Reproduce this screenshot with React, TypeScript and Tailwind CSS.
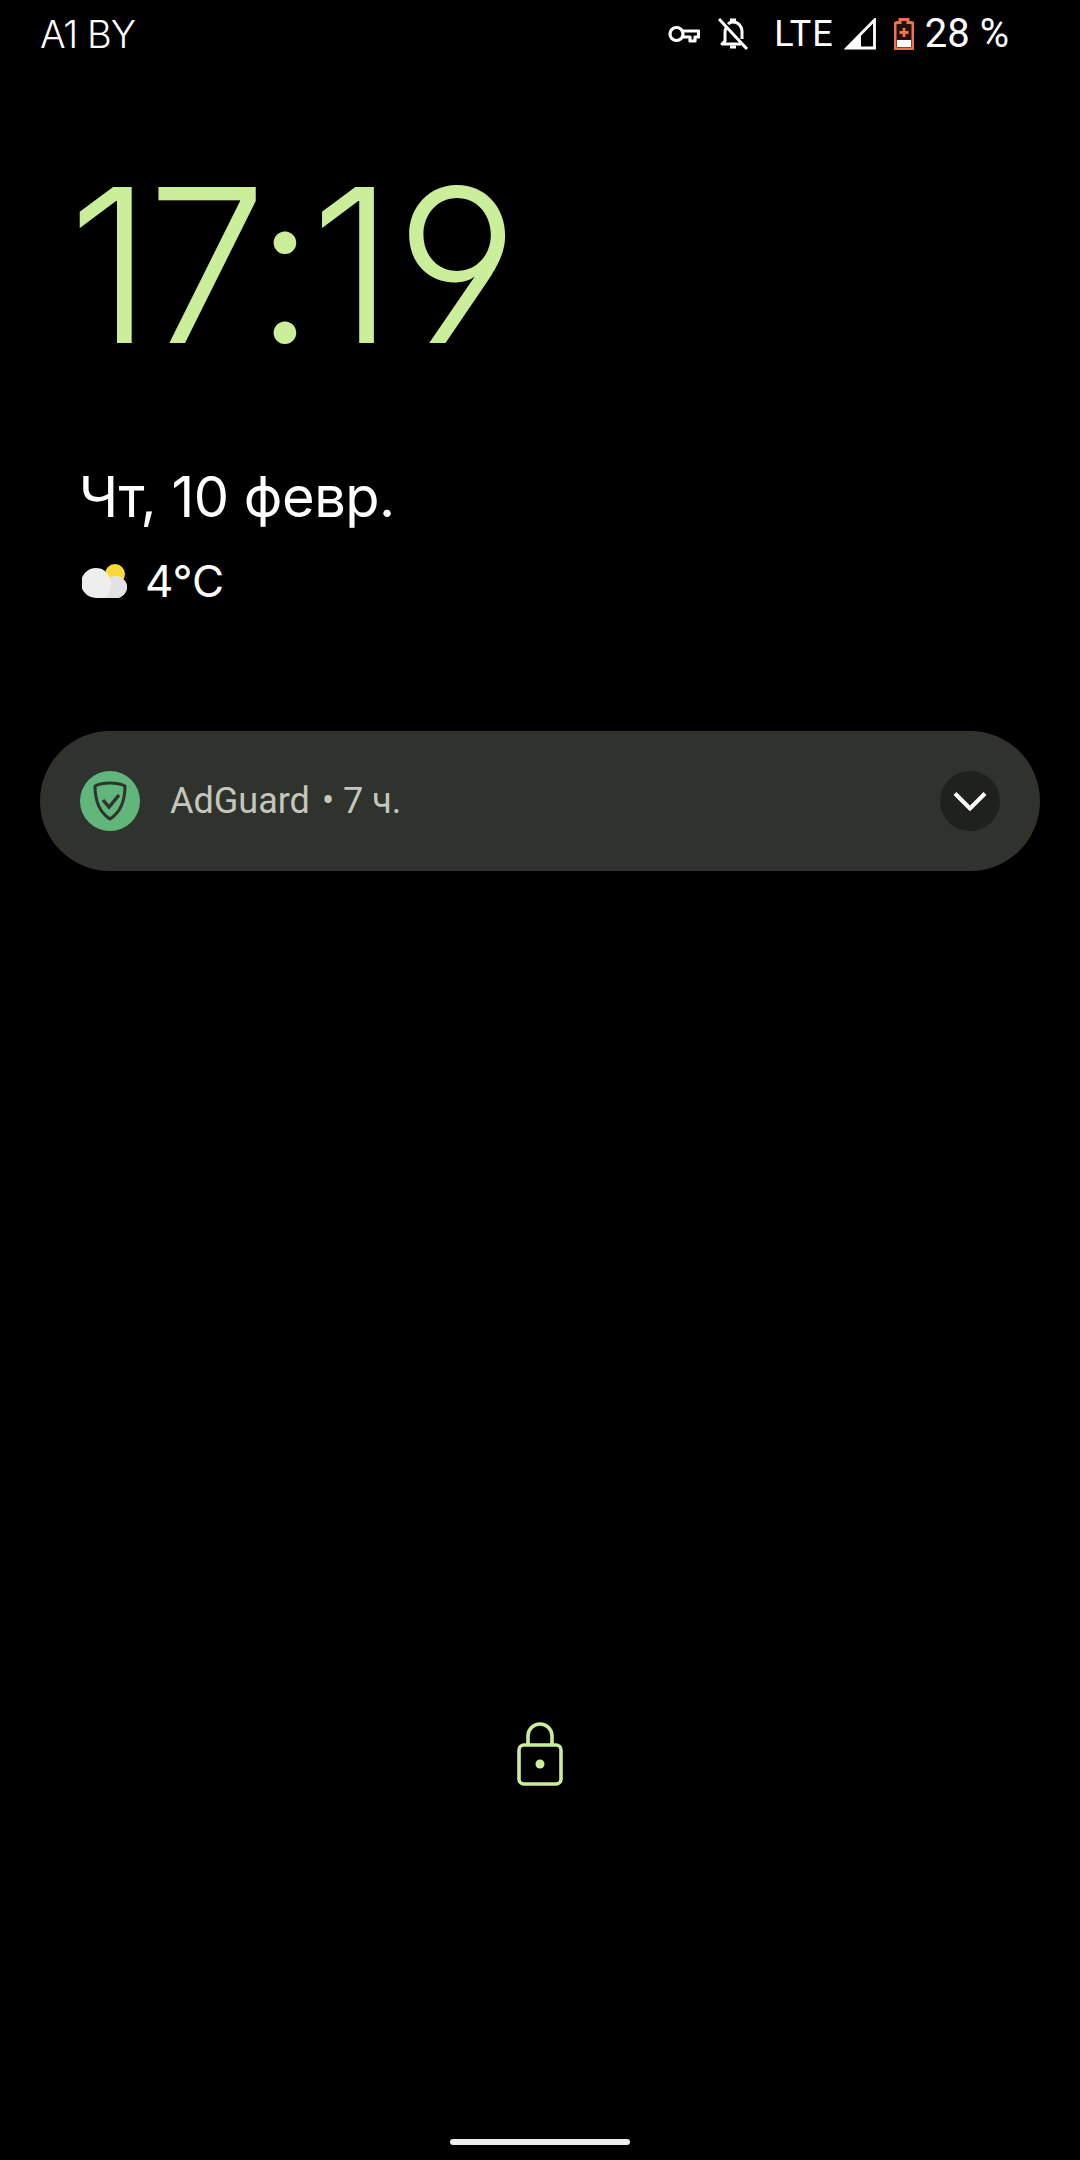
import React from 'react';

const StatusIcons: React.FC = () => (
  <div className="flex items-center">
    <svg className="w-[32px] h-[18px]" viewBox="0 0 32 18" fill="none" stroke="#fff" strokeWidth="3.200">
      <circle cx="8.500" cy="9" r="6.500" />
      <path d="M15 6h15.500v6H27v4h-5v-4h-7" strokeLinejoin="round" />
    </svg>
    <svg className="ml-[17px] w-[32px] h-[32px]" viewBox="0 0 32 32" fill="none" stroke="#fff" strokeWidth="3">
      <path d="M2 1l28 30" />
      <path d="M9 10c-1 2-1 3-1 5v8l-3 3h19M11 6c1-1 3-2 5-2 5 0 9 4 9 10v7" strokeLinejoin="round" />
      <path d="M13 2h6M13 29h6" />
    </svg>
    <span className="ml-[25px] text-[36px] leading-none font-['Roboto',sans-serif] tracking-[1px]">LTE</span>
    <svg className="ml-[10px] w-[32px] h-[32px]" viewBox="0 0 32 32">
      <path d="M30.500 2v28H3z" fill="none" stroke="#fff" strokeWidth="2.800" />
      <path d="M1 31l16-16v16z" fill="#fff" />
    </svg>
    <svg className="ml-[18px] w-[20px] h-[32px]" viewBox="0 0 20 32" fill="none">
      <path d="M6 1.500h8v3h3a2 2 0 0 1 2 2v22.500a2 2 0 0 1-2 2H3a2 2 0 0 1-2-2V6.500a2 2 0 0 1 2-2h3z" stroke="#f2704a" strokeWidth="3" fill="#f2704a" fillOpacity="0.150" />
      <path d="M3 22h14v7H3z" fill="#fff" />
      <path d="M10 10v9M5.500 14.500h9" stroke="#f2704a" strokeWidth="2.800" />
    </svg>
    <span className="ml-[11px] text-[40px] leading-none font-['Roboto',sans-serif] font-[450]">28 %</span>
  </div>
);

const WeatherIcon: React.FC = () => (
  <svg className="w-[46px] h-[36px]" viewBox="0 0 46 36">
    <circle cx="33" cy="11" r="10" fill="#fdd835" />
    <path d="M14 35a15 15 0 0 1 0-30c6 0 11 3 14 10 1-1 3-2 5-2 7 0 12 5 12 11s-5 11-11 11z" fill="#eeeeee" />
    <path d="M34 35c6 0 11-5 11-11 0-6-5-10-12-11-2 0-3 1-5 2 1 2 1 4 1 6 0 6-2 11-6 14z" fill="#e2e2e2" />
  </svg>
);

const ShieldCheck: React.FC = () => (
  <svg className="w-[34px] h-[40px]" viewBox="0 0 34 40" fill="none" stroke="#30322d" strokeWidth="3">
    <path d="M17 2c6 0 11 1 15 3 0 14-4 26-15 33C6 31 2 19 2 5c4-2 9-3 15-3z" strokeLinejoin="round" />
    <path d="M10 19l6 7 10-12" strokeWidth="3.400" />
  </svg>
);

const App: React.FC = () => {
  return (
    <div className="w-[1080px] h-[2160px] bg-black text-white flex flex-col overflow-hidden font-['Roboto',sans-serif]">
      <div className="h-[68px] pl-[40px] pr-[71px] flex items-center justify-between">
        <span className="text-[38px] leading-none font-['Inter',sans-serif] font-[350] tracking-[-1px]">A1 BY</span>
        <StatusIcons />
      </div>

      <div className="pl-[68px] mt-[88px] text-[#cbee9b] text-[214px] leading-[220px] font-['Inter',sans-serif] font-[350] tracking-[-5px] [font-feature-settings:'cv04','ss01']">
        17:1<span className="ml-[6px]">9</span>
      </div>

      <div className="pl-[79px] mt-[86px] text-[56px] leading-[70px] font-['Inter',sans-serif] font-normal tracking-[-0.5px]">
        Чт, 10 февр.
      </div>

      <div className="pl-[82px] mt-[21px] flex items-center gap-[17px]">
        <WeatherIcon />
        <span className="text-[44px] leading-[56px] font-['Inter',sans-serif] font-normal">4°C</span>
      </div>

      <div className="mx-[40px] mt-[122px] h-[140px] rounded-[70px] bg-[#30322d] flex items-center px-[40px]">
        <div className="w-[60px] h-[60px] rounded-full bg-[#61b67b] flex items-center justify-center">
          <ShieldCheck />
        </div>
        <span className="ml-[30px] text-[36px] text-[#c4c7bb]">AdGuard</span>
        <span className="ml-[12px] text-[36px] text-[#c4c7bb]">• 7 ч.</span>
        <div className="ml-auto w-[60px] h-[60px] rounded-full bg-[#1f211c] flex items-center justify-center">
          <svg className="w-[34px] h-[20px]" viewBox="0 0 34 20" fill="none" stroke="#fff" strokeWidth="4">
            <path d="M2 2.500l15 15 15-15" />
          </svg>
        </div>
      </div>

      <div className="flex justify-center mt-[851px]">
        <svg className="w-[46px] h-[64px]" viewBox="0 0 46 64" fill="none" stroke="#cbee9b" strokeWidth="3.600">
          <rect x="2" y="23" width="42" height="39" rx="5" />
          <path d="M11 23V14a12 12 0 0 1 24 0v9" />
          <circle cx="23" cy="42" r="4.500" fill="#cbee9b" stroke="none" />
        </svg>
      </div>

      <div className="flex justify-center mt-[353px]">
        <div className="w-[180px] h-[6px] rounded-full bg-[#eeeeee]" />
      </div>
    </div>
  );
};

export default App;
